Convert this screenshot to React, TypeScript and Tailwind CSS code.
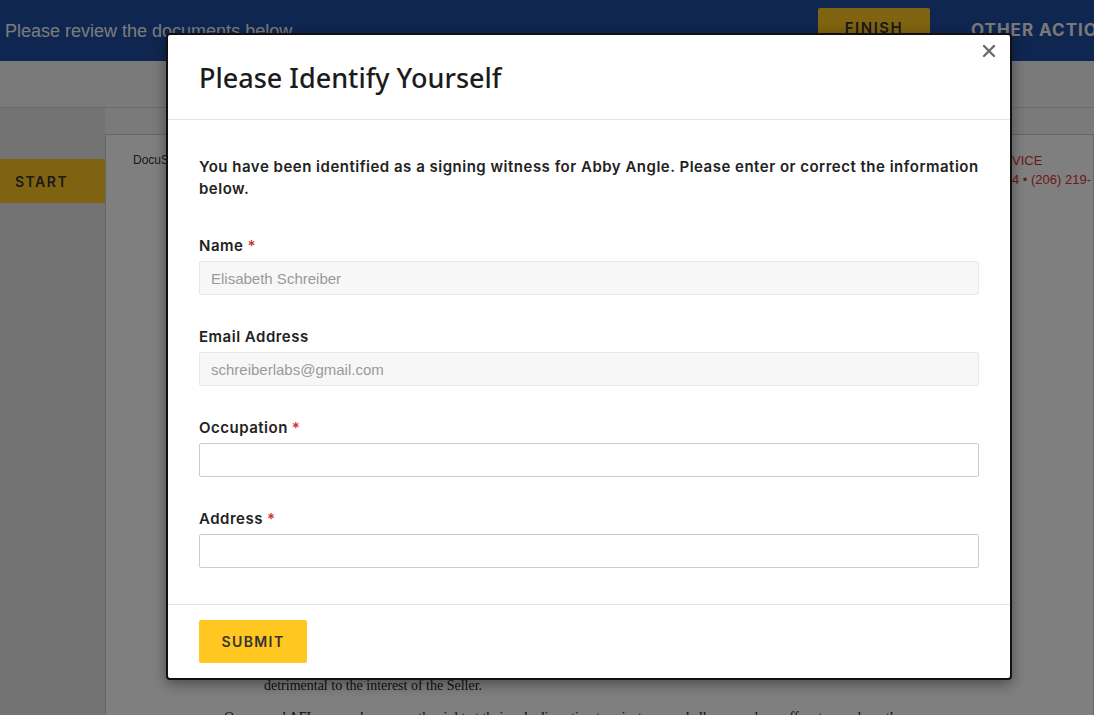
import React from 'react';

const sans = { fontFamily: 'Inter, "Noto Sans", sans-serif' };

function Field({
  label,
  required,
  value,
  readOnly,
}: {
  label: string;
  required?: boolean;
  value?: string;
  readOnly?: boolean;
}) {
  return (
    <div className="flex flex-col">
      <label className="pt-[2px] text-[15px] font-semibold leading-[20px] tracking-[0.5px] text-[#222]">
        {label}
        {required && <span className="ml-[4px] text-[#d0342c]">*</span>}
      </label>
      <input
        readOnly
        defaultValue={value}
        className={
          readOnly
            ? 'mt-[5px] h-[34px] rounded-[2px] border border-[#e8e8e8] bg-[#f7f7f7] px-[11px] text-[15px] text-[#9a9a9a] outline-none'
            : 'mt-[5px] h-[34px] rounded-[2px] border border-[#cccccc] bg-white px-[11px] text-[15px] text-[#333] outline-none'
        }
        style={{ fontFamily: '"Liberation Sans", Arial, sans-serif' }}
      />
    </div>
  );
}

export default function App() {
  return (
    <div
      className="relative h-[715px] w-[1094px] overflow-hidden bg-[#f4f4f4]"
      style={{ fontFamily: '"Liberation Sans", Arial, sans-serif' }}
    >
      {/* page behind the dialog */}
      <header className="flex h-[61px] items-center overflow-hidden bg-[#1f4ca0] pl-[5px]">
        <span className="w-[813px] shrink-0 pt-[2px] text-[18px] text-[#f4f6fa]">
          Please review the documents below
        </span>
        <button
          className="mt-[-4px] h-[42px] w-[112px] shrink-0 rounded-[2px] bg-[#ffc720] text-[15px] font-semibold tracking-[1.5px] text-[#333]"
          style={sans}
        >
          FINISH
        </button>
        <span
          className="ml-[41px] shrink-0 whitespace-nowrap text-[17px] font-bold tracking-[1px] text-[#f2f2f2]"
          style={sans}
        >
          OTHER ACTIONS
        </span>
      </header>
      <div className="h-[47px] border-b border-[#d8d8d8] bg-[#f4f4f4]" />
      <div className="flex">
        <aside className="h-[620px] w-[105px] shrink-0 bg-[#e6e6e6] pt-[51px]">
          <div
            className="flex h-[44px] items-center bg-[#ffc720] pl-[15px] pt-[1px] text-[14px] font-semibold tracking-[1.5px] text-[#333]"
            style={sans}
          >
            START
          </div>
        </aside>
        <div className="mt-[26px] h-[640px] flex-1 border border-[#cfcfcf] bg-white">
          <div className="flex justify-between pl-[27px] pt-[16px]">
            <span className="text-[12px] text-[#333]">DocuSign Envelope ID</span>
            <div className="flex flex-col pr-[2px] text-[13px] leading-[19px] text-[#e03030]">
              <span>VICE</span>
              <span>4 • (206) 219-</span>
            </div>
          </div>
          <div
            className="pl-[158px] pt-[486px] text-[14px] text-[#222]"
            style={{ fontFamily: '"Liberation Serif", serif' }}
          >
            <p>detrimental to the interest of the Seller.</p>
            <p className="ml-[-40px] mt-[11px] whitespace-nowrap">
              Owner and AFL expressly reserve the right at their sole discretion to reject any and all proposals or offers to purchase the
            </p>
          </div>
        </div>
      </div>

      {/* overlay */}
      <div className="absolute inset-0 bg-black/50" />

      {/* dialog */}
      <div className="absolute left-[166px] top-[33px] w-[846px] overflow-hidden rounded-[4px] border-2 border-[#111] bg-white shadow-[0_4px_14px_rgba(0,0,0,0.4)]">
        <div className="relative flex h-[85px] items-center border-b border-[#e5e5e5] px-[31px]">
          <h2
            className="pt-[2px] text-[27px] font-medium text-[#1c1c1c]"
            style={{ fontFamily: '"Noto Sans", "Open Sans", sans-serif' }}
          >
            Please Identify Yourself
          </h2>
          <button className="absolute right-[14px] top-[9px]">
            <svg width="14" height="14" viewBox="0 0 14 14">
              <path d="M2 2 L12 12 M12 2 L2 12" stroke="#6a6a6a" strokeWidth="2.4" strokeLinecap="round" />
            </svg>
          </button>
        </div>
        <div className="px-[31px] pb-[36px] pt-[36px]" style={sans}>
          <p className="text-[15px] font-semibold leading-[22px] tracking-[0.5px] text-[#222]">
            You have been identified as a signing witness for Abby Angle. Please enter or correct the information below.
          </p>
          <div className="mt-[34px] flex flex-col gap-[30px]">
            <Field label="Name" required value="Elisabeth Schreiber" readOnly />
            <Field label="Email Address" value="schreiberlabs@gmail.com" readOnly />
            <Field label="Occupation" required />
            <Field label="Address" required />
          </div>
        </div>
        <div className="border-t border-[#e5e5e5] px-[31px] pb-[15px] pt-[15px]">
          <button
            className="h-[43px] w-[108px] rounded-[2px] bg-[#ffc720] text-[14px] font-semibold tracking-[1.4px] text-[#333]"
            style={sans}
          >
            SUBMIT
          </button>
        </div>
      </div>
    </div>
  );
}
